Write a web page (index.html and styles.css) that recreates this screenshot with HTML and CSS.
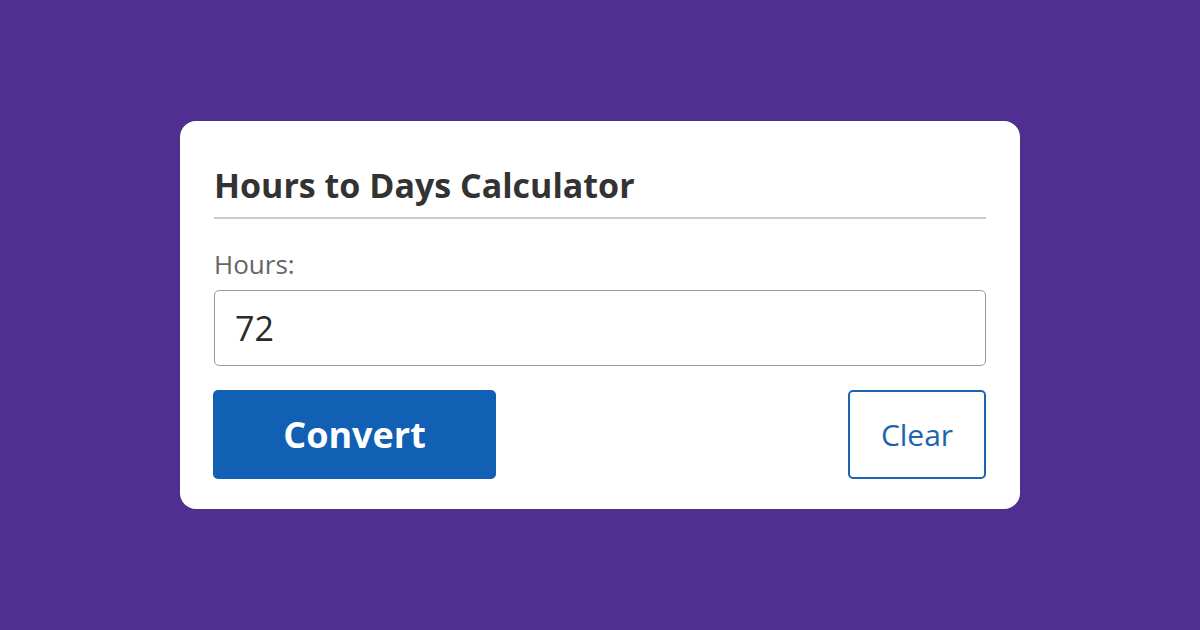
FILE: index.html
```html
<!DOCTYPE html>
<html>
<head>
<meta charset="utf-8">
<link rel="stylesheet" href="styles.css">
</head>
<body>
<div class="stage">
  <div class="card">
    <h1 class="title">Hours to Days Calculator</h1>
    <label class="label" for="hours">Hours:</label>
    <input class="input" id="hours" type="text" value="72">
    <div class="actions">
      <button class="btn-primary">Convert</button>
      <button class="btn-secondary">Clear</button>
    </div>
  </div>
</div>
</body>
</html>
```
FILE: styles.css
```css
html, body {
  margin: 0;
  padding: 0;
}
body {
  width: 1200px;
  height: 630px;
  background: #4f3090;
  font-family: "Open Sans", "Noto Sans", sans-serif;
}
.stage {
  display: flex;
  justify-content: center;
  padding-top: 121px;
}
.card {
  width: 840px;
  box-sizing: border-box;
  height: 388px;
  background: #fff;
  border-radius: 16px;
  padding: 33px 34px 0 34px;
  display: flex;
  flex-direction: column;
}
.title {
  margin: 0;
  font-size: 34px;
  font-weight: 700;
  color: #333;
  line-height: 63px;
  border-bottom: 2px solid #cccccc;
}
.label {
  margin-top: 28px;
  font-size: 26px;
  color: #666;
  line-height: 34px;
}
.input {
  margin-top: 9px;
  height: 76px;
  box-sizing: border-box;
  border: 1px solid #9a9a9a;
  border-radius: 5px;
  padding: 0 20px;
  font-family: "Open Sans", sans-serif;
  font-size: 34px;
  color: #2a2a2a;
  outline: none;
}
.actions {
  margin-top: 24px;
  display: flex;
  justify-content: space-between;
}
.btn-primary {
  width: 283px;
  height: 89px;
  border: none;
  border-radius: 5px;
  background: #1160b4;
  color: #fff;
  font-family: "Open Sans", sans-serif;
  font-size: 36px;
  font-weight: 700;
  margin-left: -1px;
}
.btn-secondary {
  width: 138px;
  height: 89px;
  border: 2px solid #1c63b0;
  border-radius: 5px;
  background: #fff;
  color: #1c63b0;
  font-family: "Open Sans", sans-serif;
  font-size: 30px;
}
```
